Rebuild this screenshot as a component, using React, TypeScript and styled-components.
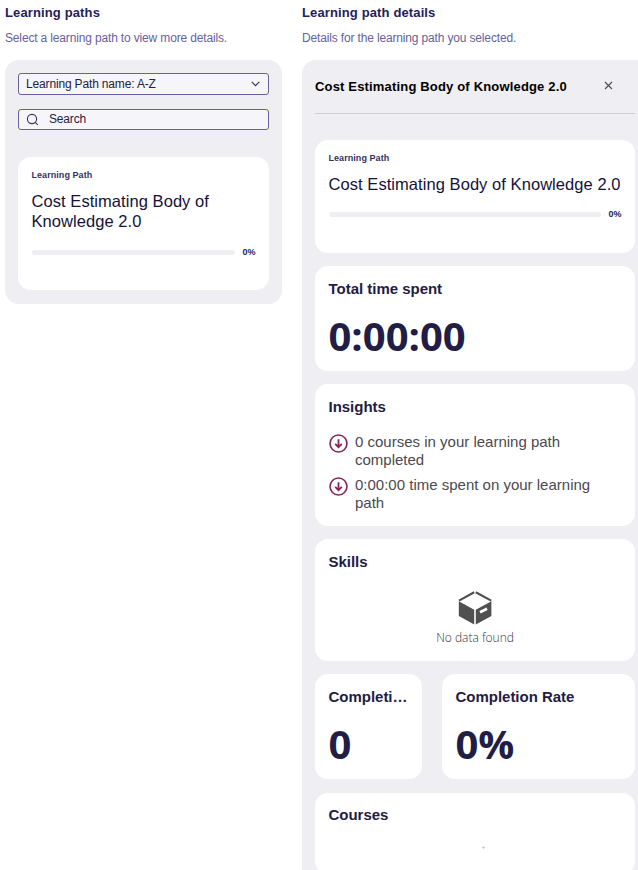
import React from "react";
import styled, { createGlobalStyle } from "styled-components";

const GlobalStyle = createGlobalStyle`
  *, *::before, *::after { box-sizing: border-box; }
  html, body { margin: 0; height: 870px; overflow: hidden; background: #fff; }
  body { font-family: "Liberation Sans", Arial, sans-serif; color: #1f1c45; }
  h1, h2, h3, p, ul { margin: 0; padding: 0; }
`;

const Page = styled.main`
  display: grid;
  grid-template-columns: 277px 346px;
  column-gap: 20px;
  align-items: start;
  padding: 4px 0 0 5px;
  width: 638px;
  height: 870px;
  overflow: hidden;
`;

const Column = styled.section`
  min-width: 0;
`;

const ColumnTitle = styled.h1`
  font-size: 13px;
  line-height: 18px;
  font-weight: 700;
  letter-spacing: 0.13px;
  color: #25215a;
  white-space: nowrap;
`;

const ColumnHint = styled.p`
  margin-top: 8px;
  font-size: 12px;
  line-height: 16px;
  letter-spacing: -0.155px;
  color: #67629b;
  white-space: nowrap;
`;

const Panel = styled.div<{ $open?: boolean }>`
  margin-top: 14px;
  padding: 13px 13px 14px;
  background: #efeef3;
  border-radius: ${(p) => (p.$open ? "14px 0 0 0" : "14px")};
  min-height: ${(p) => (p.$open ? "830px" : "0")};
`;

const Control = styled.div<{ $height: number }>`
  display: flex;
  align-items: center;
  height: ${(p) => p.$height}px;
  padding: 0 8px 0 7px;
  border: 1px solid #67629f;
  border-radius: 3px;
  background: #f6f5f9;
  font-size: 12px;
  line-height: 16px;
  letter-spacing: -0.16px;
  color: #25213f;
  & + & { margin-top: 14px; }
`;

const ControlText = styled.span<{ $indent?: number }>`
  flex: 1;
  margin-left: ${(p) => p.$indent ?? 0}px;
  margin-top: -1px;
  white-space: nowrap;
`;

const Card = styled.article<{ $height: number; $top?: number }>`
  height: ${(p) => p.$height}px;
  padding: ${(p) => p.$top ?? 13}px 13.5px 0;
  background: #fff;
  border-radius: 13px;
  min-width: 0;
`;

const ListArea = styled.div`
  padding-top: 27px;
`;

const Kind = styled.p`
  font-size: 9px;
  line-height: 10px;
  font-weight: 700;
  letter-spacing: 0.06px;
  color: #35325f;
`;

const PathName = styled.h2`
  margin: 11px -6px 0 0;
  font-size: 16.5px;
  line-height: 20px;
  font-weight: 400;
  letter-spacing: 0.06px;
  color: #15123a;
`;

const Progress = styled.div<{ $top: number }>`
  display: flex;
  align-items: center;
  gap: 7px;
  margin-top: ${(p) => p.$top}px;
  height: 12px;
`;

const Track = styled.div`
  flex: 1;
  height: 5px;
  border-radius: 3px;
  background: #efeef3;
`;

const Percent = styled.span`
  font-size: 9px;
  line-height: 12px;
  font-weight: 700;
  color: #25215a;
`;

const DetailHeader = styled.header`
  display: flex;
  justify-content: space-between;
  align-items: flex-start;
  width: 320px;
  height: 41px;
  padding: 4px 22px 0 0;
  border-bottom: 1px solid #cfced4;
`;

const DetailTitle = styled.h2`
  margin-top: 1px;
  font-size: 13px;
  line-height: 18px;
  font-weight: 700;
  letter-spacing: 0.17px;
  color: #000;
  white-space: nowrap;
`;

const CloseButton = styled.button`
  display: flex;
  border: 0;
  padding: 0;
  margin-top: 4px;
  background: none;
`;

const Stack = styled.div`
  display: flex;
  flex-direction: column;
  gap: 13px;
  width: 320px;
  padding-top: 26px;
`;

const CardTitle = styled.h3`
  font-size: 15px;
  line-height: 20px;
  font-weight: 700;
  letter-spacing: -0.02px;
  color: #1f1c45;
  white-space: nowrap;
`;

const BigValue = styled.p`
  margin-top: 9px;
  font-family: "Open Sans", "Noto Sans", sans-serif;
  font-size: 40px;
  line-height: 56px;
  font-weight: 700;
  color: #211d45;
`;

const InsightList = styled.ul`
  list-style: none;
  display: grid;
  gap: 7px;
  margin-top: 16px;
`;

const Insight = styled.li`
  display: flex;
  gap: 7.5px;
  font-size: 15px;
  line-height: 18px;
  color: #4b4a50;
  svg { flex: none; margin-top: 1px; }
`;

const Empty = styled.div`
  display: flex;
  flex-direction: column;
  align-items: center;
  margin-top: 19px;
  font-family: "Open Sans", "Noto Sans", sans-serif;
  font-size: 12px;
  font-weight: 300;
  line-height: 18px;
  color: #333;
  svg { margin-bottom: 4px; }
`;

const MetricRow = styled.div`
  display: grid;
  grid-template-columns: 107px 193px;
  gap: 20px;
  margin-bottom: 1px;
`;

const Loader = styled.div`
  display: flex;
  justify-content: center;
  padding: 21px 0 0 17px;
`;

const DownArrow = () => (
  <svg width="19" height="19" viewBox="0 0 19 19" fill="none" stroke="#84265b" strokeWidth="1.6">
    <circle cx="9.5" cy="9.5" r="8.5" />
    <path d="M9.5 5.3v7.8M6.2 9.9l3.3 3.3 3.3-3.3" strokeWidth="1.8" />
  </svg>
);

const BoxIcon = () => (
  <svg width="34" height="34" viewBox="0 0 34 34">
    <g fill="#505050">
      <path d="M0.8 10.2 16.2 18.8V33.6L0.8 25Z" />
      <path d="M17.8 18.8 33.4 10.2V25L17.8 33.6Z" />
    </g>
    <path d="M1 9.6 16.2 1.3M17.8 1.3 33.2 9.6" stroke="#505050" strokeWidth="2.2" fill="none" />
    <path d="M22 21.3 29 17.8" stroke="#fff" strokeWidth="2.8" />
  </svg>
);

const PathSummary = ({ barTop }: { barTop: number }) => (
  <>
    <Kind>Learning Path</Kind>
    <PathName>Cost Estimating Body of Knowledge 2.0</PathName>
    <Progress $top={barTop}>
      <Track />
      <Percent>0%</Percent>
    </Progress>
  </>
);

const insights = [
  "0 courses in your learning path completed",
  "0:00:00 time spent on your learning path",
];

export default function App() {
  return (
    <>
      <GlobalStyle />
      <Page>
        <Column>
          <ColumnTitle>Learning paths</ColumnTitle>
          <ColumnHint>Select a learning path to view more details.</ColumnHint>
          <Panel>
            <Control $height={22}>
              <ControlText>Learning Path name: A-Z</ControlText>
              <svg width="9" height="6" viewBox="0 0 9 6" fill="none" stroke="#35325f" strokeWidth="1.1">
                <path d="M0.7 0.8 4.5 4.6 8.3 0.8" />
              </svg>
            </Control>
            <Control $height={21}>
              <svg width="13" height="13" viewBox="0 0 13 13" fill="none" stroke="#35325f" strokeWidth="1.1">
                <circle cx="6" cy="6" r="4.6" />
                <path d="m9.3 9.3 2.5 2.5" />
              </svg>
              <ControlText $indent={10}>Search</ControlText>
            </Control>
            <ListArea>
              <Card $height={133}>
                <PathSummary barTop={15} />
              </Card>
            </ListArea>
          </Panel>
        </Column>
        <Column>
          <ColumnTitle>Learning path details</ColumnTitle>
          <ColumnHint>Details for the learning path you selected.</ColumnHint>
          <Panel $open>
            <DetailHeader>
              <DetailTitle>Cost Estimating Body of Knowledge 2.0</DetailTitle>
              <CloseButton aria-label="Close">
                <svg width="9" height="9" viewBox="0 0 9 9" stroke="#4b4a55" strokeWidth="1.1">
                  <path d="m1 1 7 7M8 1 1 8" />
                </svg>
              </CloseButton>
            </DetailHeader>
            <Stack>
              <Card $height={113}>
                <PathSummary barTop={14} />
              </Card>
              <Card $height={105}>
                <CardTitle>Total time spent</CardTitle>
                <BigValue>0:00:00</BigValue>
              </Card>
              <Card $height={142}>
                <CardTitle>Insights</CardTitle>
                <InsightList>
                  {insights.map((text) => (
                    <Insight key={text}>
                      <DownArrow />
                      <span>{text}</span>
                    </Insight>
                  ))}
                </InsightList>
              </Card>
              <Card $height={122}>
                <CardTitle>Skills</CardTitle>
                <Empty>
                  <BoxIcon />
                  No data found
                </Empty>
              </Card>
              <MetricRow>
                <Card $height={105}>
                  <CardTitle>Completi…</CardTitle>
                  <BigValue>0</BigValue>
                </Card>
                <Card $height={105}>
                  <CardTitle>Completion Rate</CardTitle>
                  <BigValue>0%</BigValue>
                </Card>
              </MetricRow>
              <Card $height={81} $top={12}>
                <CardTitle>Courses</CardTitle>
                <Loader>
                  <svg width="3" height="3" viewBox="0 0 3 3" stroke="#cfc8ec" strokeWidth="1">
                    <path d="M1.5 0v3M0 1.5h3" />
                  </svg>
                </Loader>
              </Card>
            </Stack>
          </Panel>
        </Column>
      </Page>
    </>
  );
}
